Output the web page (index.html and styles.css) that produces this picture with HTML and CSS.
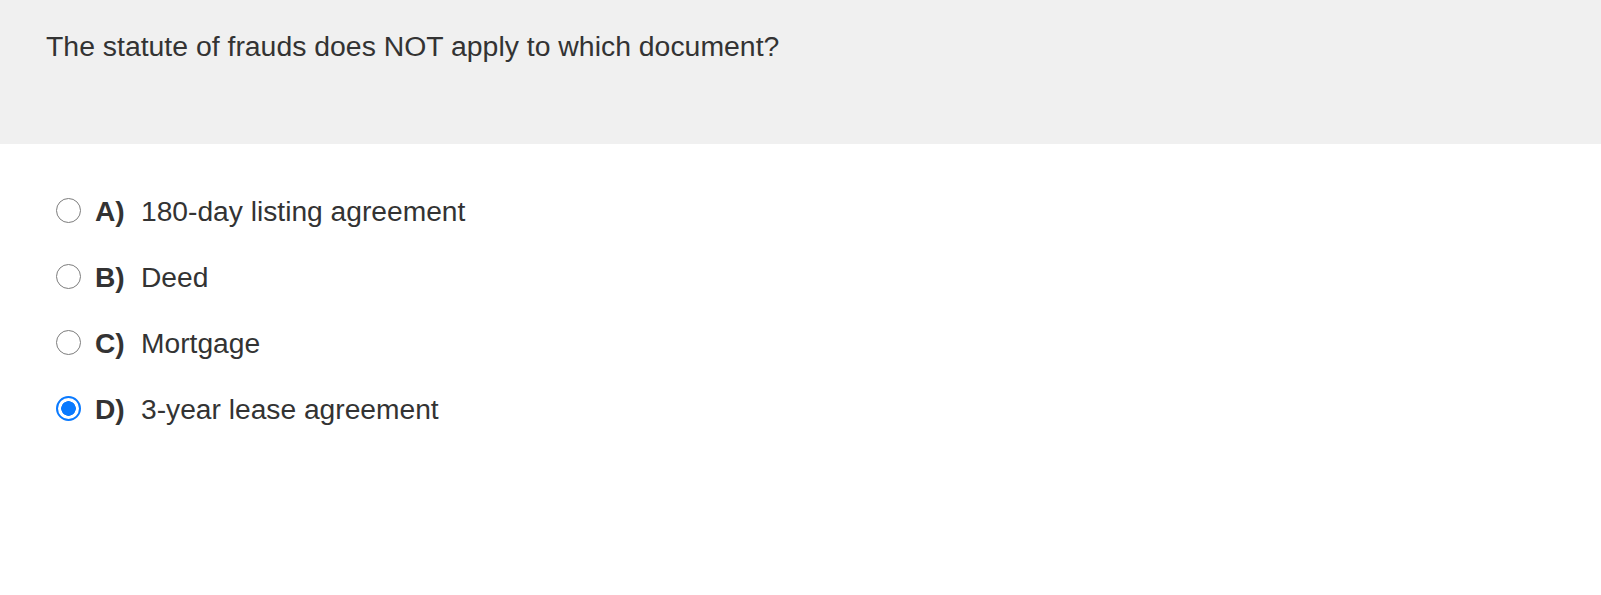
FILE: index.html
```html
<!DOCTYPE html>
<html>
<head>
<meta charset="utf-8">
<link rel="stylesheet" href="styles.css">
</head>
<body>
<div class="question">The statute of frauds does NOT apply to which document?</div>
<ul class="options">
  <li class="option"><span class="radio"></span><span class="letter">A)</span><span class="text">180-day listing agreement</span></li>
  <li class="option"><span class="radio"></span><span class="letter">B)</span><span class="text">Deed</span></li>
  <li class="option"><span class="radio"></span><span class="letter">C)</span><span class="text">Mortgage</span></li>
  <li class="option"><span class="radio checked"></span><span class="letter">D)</span><span class="text">3-year lease agreement</span></li>
</ul>
</body>
</html>
```
FILE: styles.css
```css
html, body {
  margin: 0;
  padding: 0;
  background: #fff;
  font-family: "Liberation Sans", Arial, sans-serif;
  color: #333;
}
.question {
  background: #f0f0f0;
  height: 144px;
  box-sizing: border-box;
  padding: 30px 46px 0;
  font-size: 28.4px;
  line-height: 32px;
}
.options {
  list-style: none;
  margin: 0;
  padding: 34px 0 0 56px;
}
.option {
  display: flex;
  align-items: center;
  height: 66px;
  font-size: 28.2px;
  line-height: 32px;
}
.radio {
  width: 25px;
  height: 25px;
  border: 1.5px solid #7d7d7d;
  border-radius: 50%;
  box-sizing: border-box;
  margin: 0 14px 1px 0;
  flex: none;
}
.radio.checked {
  border: 2px solid #0a7aff;
  background: radial-gradient(circle, #0a7aff 0 7px, #fff 7.6px);
}
.letter {
  font-weight: bold;
  width: 46px;
}
```
